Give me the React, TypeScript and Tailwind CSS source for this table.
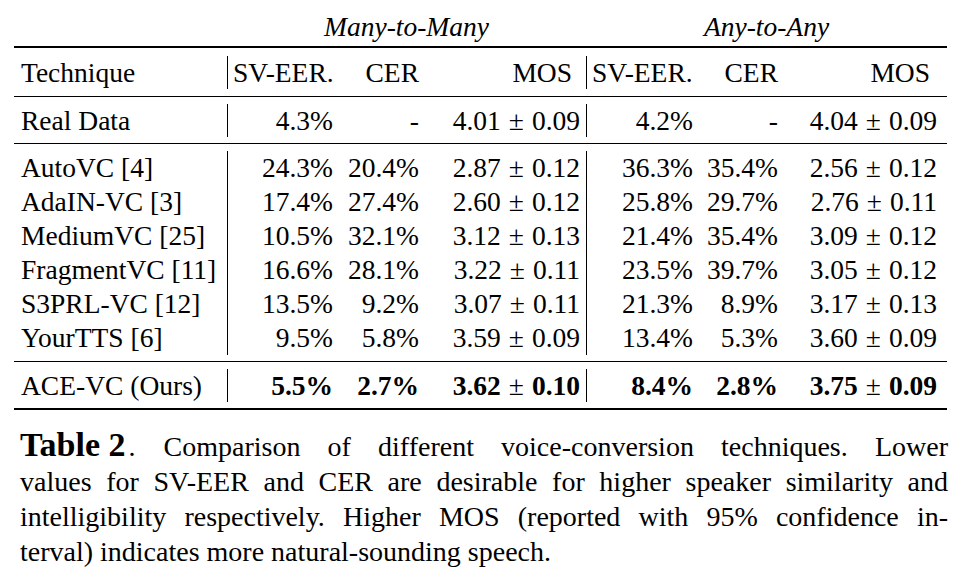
import React from "react";

type Row = {
  name: string;
  v: [string, string, [string, string], string, string, [string, string]];
  bold?: boolean;
};

const realRows: Row[] = [
  { name: "Real Data", v: ["4.3%", "-", ["4.01", "0.09"], "4.2%", "-", ["4.04", "0.09"]] },
];

const mainRows: Row[] = [
  { name: "AutoVC [4]", v: ["24.3%", "20.4%", ["2.87", "0.12"], "36.3%", "35.4%", ["2.56", "0.12"]] },
  { name: "AdaIN-VC [3]", v: ["17.4%", "27.4%", ["2.60", "0.12"], "25.8%", "29.7%", ["2.76", "0.11"]] },
  { name: "MediumVC [25]", v: ["10.5%", "32.1%", ["3.12", "0.13"], "21.4%", "35.4%", ["3.09", "0.12"]] },
  { name: "FragmentVC [11]", v: ["16.6%", "28.1%", ["3.22", "0.11"], "23.5%", "39.7%", ["3.05", "0.12"]] },
  { name: "S3PRL-VC [12]", v: ["13.5%", "9.2%", ["3.07", "0.11"], "21.3%", "8.9%", ["3.17", "0.13"]] },
  { name: "YourTTS [6]", v: ["9.5%", "5.8%", ["3.59", "0.09"], "13.4%", "5.3%", ["3.60", "0.09"]] },
];

const oursRows: Row[] = [
  { name: "ACE-VC (Ours)", v: ["5.5%", "2.7%", ["3.62", "0.10"], "8.4%", "2.8%", ["3.75", "0.09"]], bold: true },
];

function Mos({ m, bold }: { m: [string, string]; bold?: boolean }) {
  return (
    <>
      <span className={bold ? "font-bold" : ""}>{m[0]}</span>
      <span className="mx-[8px]">±</span>
      <span className={bold ? "font-bold" : ""}>{m[1]}</span>
    </>
  );
}

function DataRow({ r, h }: { r: Row; h: string }) {
  const b = r.bold ? "font-bold" : "";
  return (
    <div className={`flex items-center ${h}`}>
      <div className="w-[213px] h-full flex items-center pl-[7px] whitespace-nowrap">{r.name}</div>
      <div className={`w-[106px] h-full flex items-center justify-end border-l border-black ${b}`}>{r.v[0]}</div>
      <div className={`w-[86px] h-full flex items-center justify-end ${b}`}>{r.v[1]}</div>
      <div className="w-[167px] h-full flex items-center justify-end pr-[6px] whitespace-nowrap">
        <Mos m={r.v[2]} bold={r.bold} />
      </div>
      <div className={`w-[107px] h-full flex items-center justify-end border-l border-black ${b}`}>{r.v[3]}</div>
      <div className={`w-[85px] h-full flex items-center justify-end ${b}`}>{r.v[4]}</div>
      <div className="w-[169px] h-full flex items-center justify-end pr-[10px] whitespace-nowrap">
        <Mos m={r.v[5]} bold={r.bold} />
      </div>
    </div>
  );
}

export default function App() {
  return (
    <div className="w-[963px] h-[582px] bg-white text-black [font-family:'Liberation_Serif','Times_New_Roman',serif] overflow-hidden">
      <div className="pl-[14px] w-[947px] text-[27.5px]">
        {/* group titles */}
        <div className="flex h-[46px] pt-[10px] leading-[34px] italic">
          <div className="w-[213px]" />
          <div className="w-[359px] text-center">Many-to-Many</div>
          <div className="w-[361px] text-center">Any-to-Any</div>
        </div>
        <div className="h-[2px] bg-black" />
        {/* header */}
        <div className="pt-[8px] pb-[7px]">
          <div className="flex items-center h-[33px] leading-[31px]">
            <div className="w-[213px] h-full flex items-center pl-[7px]">Technique</div>
            <div className="w-[106px] h-full flex items-center border-l border-black pl-[5px] whitespace-nowrap">SV-EER.</div>
            <div className="w-[86px] h-full flex items-center justify-end">CER</div>
            <div className="w-[167px] h-full flex items-center justify-end pr-[14px]">MOS</div>
            <div className="w-[107px] h-full flex items-center border-l border-black pl-[5px] whitespace-nowrap">SV-EER.</div>
            <div className="w-[85px] h-full flex items-center justify-end">CER</div>
            <div className="w-[169px] h-full flex items-center justify-end pr-[17px]">MOS</div>
          </div>
        </div>
        <div className="h-px bg-black" />
        <div className="pt-[7px] pb-[6px]">
          {realRows.map((r) => (
            <DataRow key={r.name} r={r} h="h-[33px]" />
          ))}
        </div>
        <div className="h-px bg-black" />
        <div className="pt-[7px] pb-[6px]">
          {mainRows.map((r) => (
            <DataRow key={r.name} r={r} h="h-[34px]" />
          ))}
        </div>
        <div className="h-px bg-black" />
        <div className="pt-[7px] pb-[6px]">
          {oursRows.map((r) => (
            <DataRow key={r.name} r={r} h="h-[33px]" />
          ))}
        </div>
        <div className="h-[2px] bg-black" />
      </div>
      {/* caption */}
      <div className="mt-[17px] ml-[20px] w-[928px] text-[28px] leading-[35px]">
        <div className="text-justify [text-align-last:justify]">
          <span className="inline-block whitespace-nowrap">
            <span className="font-bold text-[34px]">Table 2</span>
            <span className="ml-[3px]">.</span>
          </span>
          {"\u2003"}Comparison of different voice-conversion techniques.{" "}
          Lower
        </div>
        <div className="text-justify [text-align-last:justify]">
          values for SV-EER and CER are desirable for higher speaker similarity and
        </div>
        <div className="text-justify [text-align-last:justify]">
          intelligibility respectively. Higher MOS (reported with 95% confidence in-
        </div>
        <div>terval) indicates more natural-sounding speech.</div>
      </div>
    </div>
  );
}
